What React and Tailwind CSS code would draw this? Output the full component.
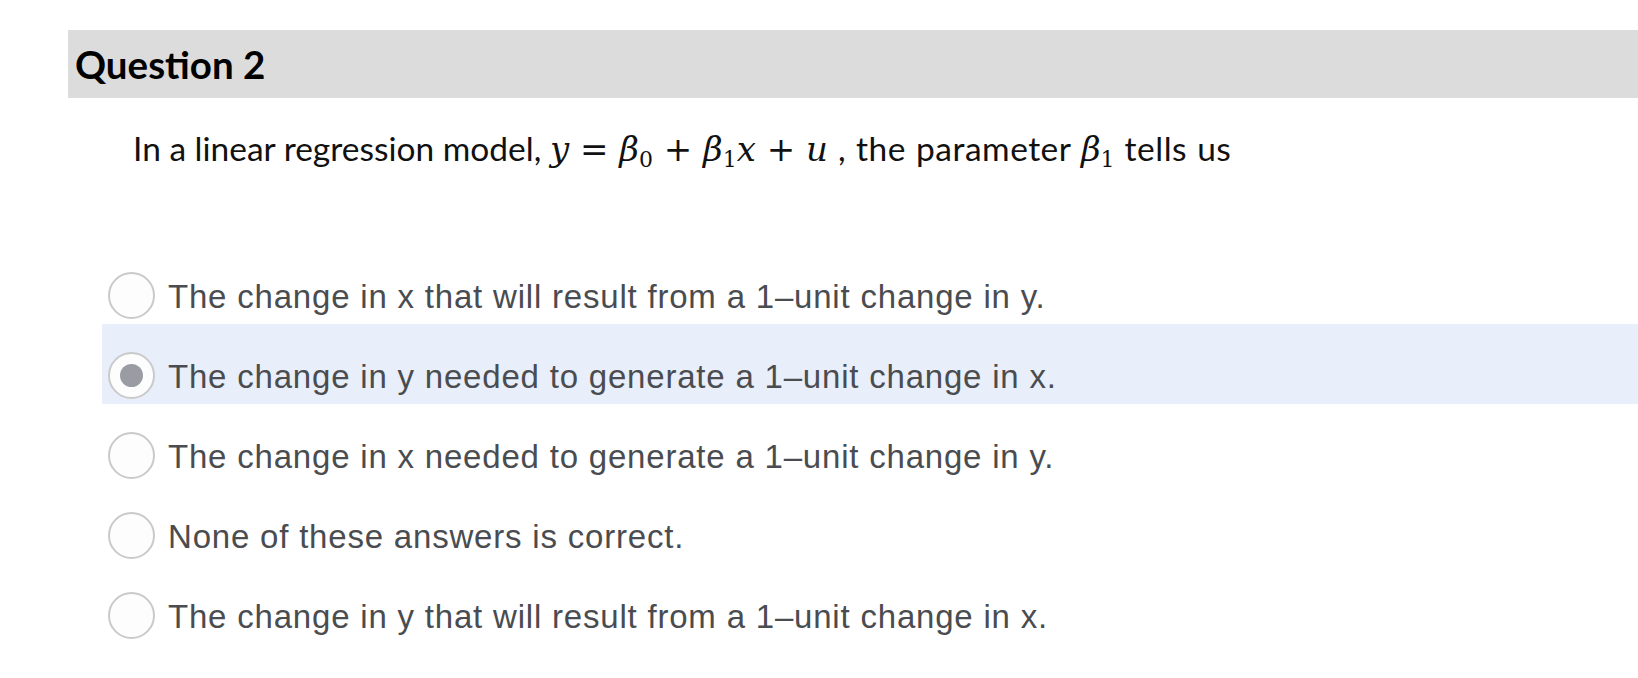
const options = [
  { text: 'The change in x that will result from a 1–unit change in y.', checked: false },
  { text: 'The change in y needed to generate a 1–unit change in x.', checked: true },
  { text: 'The change in x needed to generate a 1–unit change in y.', checked: false },
  { text: 'None of these answers is correct.', checked: false },
  { text: 'The change in y that will result from a 1–unit change in x.', checked: false },
];

function M({ children, italic = true }) {
  return (
    <span className={`text-[34px] tracking-normal [word-spacing:normal] font-['DejaVu_Serif',serif] ${italic ? 'italic' : ''}`}>
      {children}
    </span>
  );
}

function Sub({ children }) {
  return <sub className="text-[22px] tracking-normal font-['DejaVu_Serif',serif]">{children}</sub>;
}

export default function App() {
  return (
    <div className="min-h-screen bg-white pt-[30px] pl-[68px]">
      <div className="h-[68px] bg-[#dcdcdc] flex items-center pl-[7px]">
        <h2 className="text-[38.5px] font-bold text-black font-['Lato',sans-serif] leading-none">
          Question 2
        </h2>
      </div>

      <p className="mt-[30px] ml-[65px] h-[40px] text-[33.5px] leading-[40px] text-[#111] font-['Lato',sans-serif] whitespace-nowrap">
        In a linear regression model, <M>y</M>
        <M italic={false}> = </M>
        <M>β</M>
        <Sub>0</Sub>
        <M italic={false}> + </M>
        <M>β</M>
        <Sub>1</Sub>
        <M>x</M>
        <M italic={false}> + </M>
        <M>u</M>
        <span className="tracking-[0.5px] [word-spacing:1px]">
          {' '}, the parameter <M>β</M>
          <Sub>1</Sub> tells us
        </span>
      </p>

      <ul className="mt-[76px] ml-[34px]">
        {options.map((o, i) => (
          <li
            key={i}
            className={`h-[80px] flex items-center pt-[22px] pl-[6px] ${o.checked ? 'bg-[#e8effa]' : ''}`}
          >
            <span className="w-[47px] h-[47px] rounded-full border-2 border-[#cacaca] bg-[#fdfdfe] flex items-center justify-center shrink-0">
              {o.checked && <span className="w-[23px] h-[23px] rounded-full bg-[#9a9ca3]" />}
            </span>
            <span className="ml-[13px] pt-[3px] text-[33px] tracking-[0.8px] text-[#4a4c50] font-['Liberation_Sans',Arial,sans-serif] whitespace-nowrap">
              {o.text}
            </span>
          </li>
        ))}
      </ul>
    </div>
  );
}
